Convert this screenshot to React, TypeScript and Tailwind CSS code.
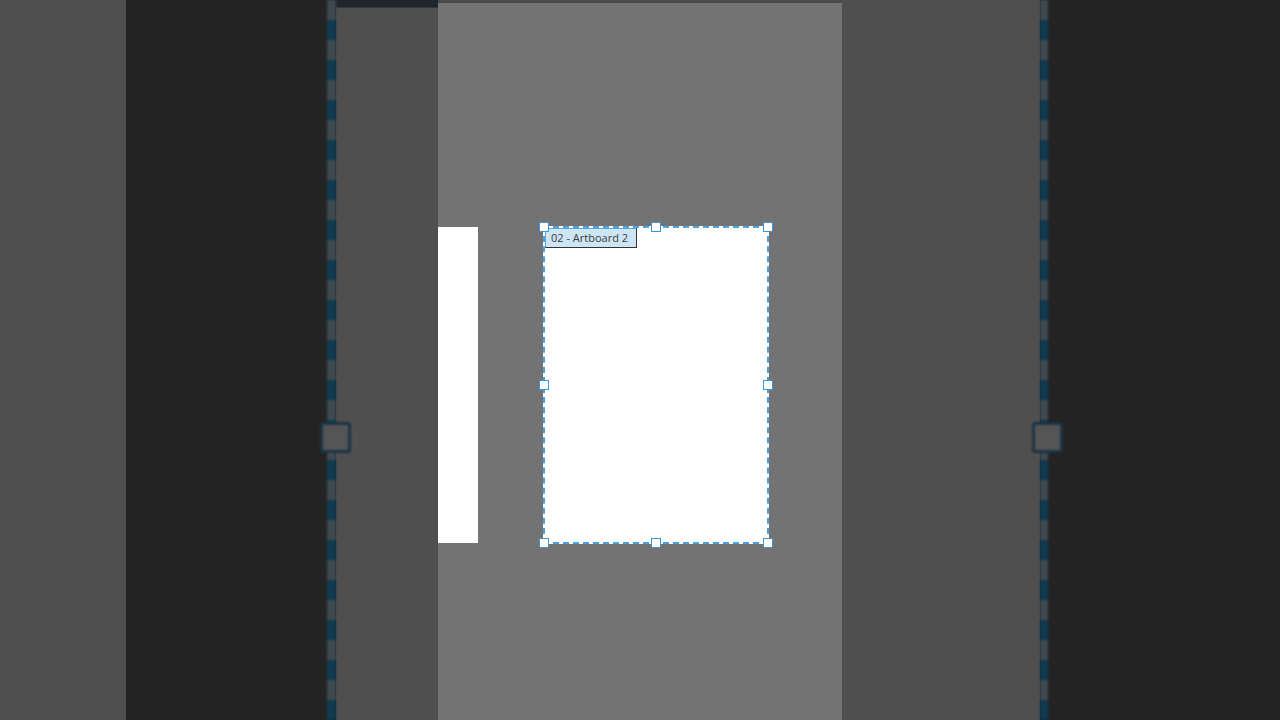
import React from 'react';

const dashV =
  'bg-[repeating-linear-gradient(to_bottom,#3e4950_0px,#3e4950_20px,#0f3a50_20px,#0f3a50_40px)]';

function Handle({ pos }: { pos: string }) {
  return <div className={`absolute w-[10px] h-[10px] bg-white border border-[#3d93d6] ${pos}`} />;
}

function SideHandle() {
  return (
    <div className="absolute top-[422px] w-[31px] h-[31px] border-[3px] border-[#1b3444] bg-[#555555] rounded-[2px] blur-[0.8px]" />
  );
}

export default function App() {
  return (
    <div className="flex w-[1280px] h-[720px] overflow-hidden bg-[#232323]" style={{ fontFamily: '"Open Sans", "Liberation Sans", sans-serif' }}>
      {/* left zoomed backdrop */}
      <div className="flex h-full w-[438px] shrink-0">
        <div className="w-[126px] h-full bg-[#4f4f4f]" />
        <div className="w-[201px] h-full bg-[#232323]" />
        <div className="relative w-[9px] h-full">
          <div className={`w-full h-full ${dashV} blur-[0.8px]`} />
          <div className="absolute left-[-7px] top-0 w-0">
            <div className="relative">
              <SideHandle />
            </div>
          </div>
        </div>
        <div className="flex-1 h-full bg-[#4f4f4f] flex flex-col">
          <div className="h-[8px] bg-[#1f2528] border-b border-[#2c3a44]" />
        </div>
      </div>

      {/* center canvas */}
      <div className="w-[404px] shrink-0 h-full bg-[#737373] flex flex-col">
        <div className="h-[3px] bg-[#4a4a4a]" />
        <div className="flex items-start pt-[223px]">
          <div className="w-[40px] h-[316px] mt-[1px] bg-white" />
          <div className="relative ml-[65px] w-[226px] h-[318px] bg-white border-2 border-dashed border-[#4aa3df]">
            <div className="absolute left-0 top-0 w-[92px] h-[20px] bg-[#cde5f5] border-l border-t border-[#5aa8de] border-r border-b border-r-[#333333] border-b-[#333333] pl-[5px] text-[11px] leading-[18px] text-[#3c3c3c] whitespace-nowrap">
              02 - Artboard 2
            </div>
            <Handle pos="left-[-6px] top-[-6px]" />
            <Handle pos="left-1/2 -translate-x-1/2 top-[-6px]" />
            <Handle pos="right-[-6px] top-[-6px]" />
            <Handle pos="left-[-6px] top-1/2 -translate-y-1/2" />
            <Handle pos="right-[-6px] top-1/2 -translate-y-1/2" />
            <Handle pos="left-[-6px] bottom-[-6px]" />
            <Handle pos="left-1/2 -translate-x-1/2 bottom-[-6px]" />
            <Handle pos="right-[-6px] bottom-[-6px]" />
          </div>
        </div>
      </div>

      {/* right zoomed backdrop */}
      <div className="flex h-full flex-1">
        <div className="w-[198px] h-full bg-[#4f4f4f]" />
        <div className="relative w-[8px] h-full">
          <div className={`w-full h-full ${dashV} blur-[0.8px]`} />
          <div className="absolute left-[-8px] top-0 w-0">
            <div className="relative">
              <SideHandle />
            </div>
          </div>
        </div>
        <div className="flex-1 h-full bg-[#232323]" />
      </div>
    </div>
  );
}
